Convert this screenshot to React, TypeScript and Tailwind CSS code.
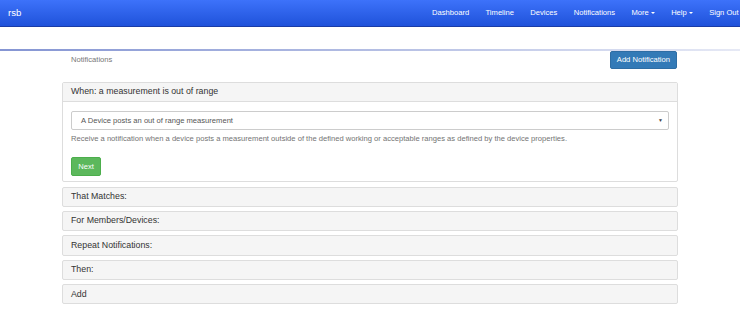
import React from "react";

const Caret = () => (
  <span className="ml-[2px] inline-block h-0 w-0 border-x-[2.5px] border-t-[2.5px] border-x-transparent border-t-white align-middle" />
);

const navItems: { label: string; caret?: boolean }[] = [
  { label: "Dashboard" },
  { label: "Timeline" },
  { label: "Devices" },
  { label: "Notifications" },
  { label: "More", caret: true },
  { label: "Help", caret: true },
  { label: "Sign Out" },
];

const collapsed = ["That Matches:", "For Members/Devices:", "Repeat Notifications:", "Then:", "Add"];

export default function App() {
  return (
    <div
      className="min-h-[332px] w-[740px] overflow-hidden bg-white text-[#333]"
      style={{ fontFamily: '"Liberation Sans", Arial, Helvetica, sans-serif' }}
    >
      {/* Navbar */}
      <div className="flex h-[27px] items-center overflow-hidden border-b border-[#1a3ca6] bg-gradient-to-b from-[#3d72fa] to-[#1f52da]">
        <div className="w-[423.8px] flex-none pl-[8px] text-[9.6px] leading-none text-white">rsb</div>
        <div className="flex flex-none items-center text-[7.6px] leading-none text-white">
          {navItems.map((n) => (
            <span key={n.label} className="flex items-center whitespace-nowrap px-[8.2px]">
              {n.label}
              {n.caret && <Caret />}
            </span>
          ))}
        </div>
      </div>

      {/* gradient rule */}
      <div className="mt-[22px] h-[2px] w-full bg-gradient-to-r from-[#8595d3] via-[#b3bde3] to-[#e6e9f5]" />

      {/* content */}
      <div className="mx-auto w-[616px]">
        <div className="-mt-[2px] flex items-start justify-between">
          <div className="pl-[9px] pt-[5px] text-[7.6px] text-[#777]">Notifications</div>
          <div className="mr-[1px] mt-[2px] flex h-[18px] items-center rounded-[2px] border border-[#2e6da4] bg-[#337ab7] px-[6px] text-[7.6px] text-white">
            Add Notification
          </div>
        </div>

        <div className="mt-[13px] flex flex-col gap-[4.2px]">
          <div className="rounded-[2px] border border-[#ddd] bg-white">
            <div className="flex h-[19px] items-center border-b border-[#ddd] bg-[#f5f5f5] px-[8px] text-[8.8px] text-[#333]">
              When: a measurement is out of range
            </div>
            <div className="px-[8px] pb-[5px] pt-[9px]">
              <div className="flex h-[19px] items-center justify-between rounded-[2px] border border-[#ccc] bg-white pl-[9px] pr-[5px] text-[7.6px] text-[#555]">
                <span>A Device posts an out of range measurement</span>
                <span className="text-[5px] text-[#444]">▼</span>
              </div>
              <div className="mt-[3px] text-[7.6px] text-[#737373]">
                Receive a notification when a device posts a measurement outside of the defined working or acceptable ranges as defined by the device properties.
              </div>
              <div className="mt-[13px] flex h-[19px] w-[30px] items-center justify-center rounded-[2px] border border-[#4cae4c] bg-[#5cb85c] text-[7.6px] text-white">
                Next
              </div>
            </div>
          </div>

          {collapsed.map((c) => (
            <div
              key={c}
              className="flex h-[20.2px] items-center rounded-[2px] border border-[#ddd] bg-[#f5f5f5] px-[8px] text-[8.8px] text-[#333]"
            >
              {c}
            </div>
          ))}
        </div>
      </div>
    </div>
  );
}
